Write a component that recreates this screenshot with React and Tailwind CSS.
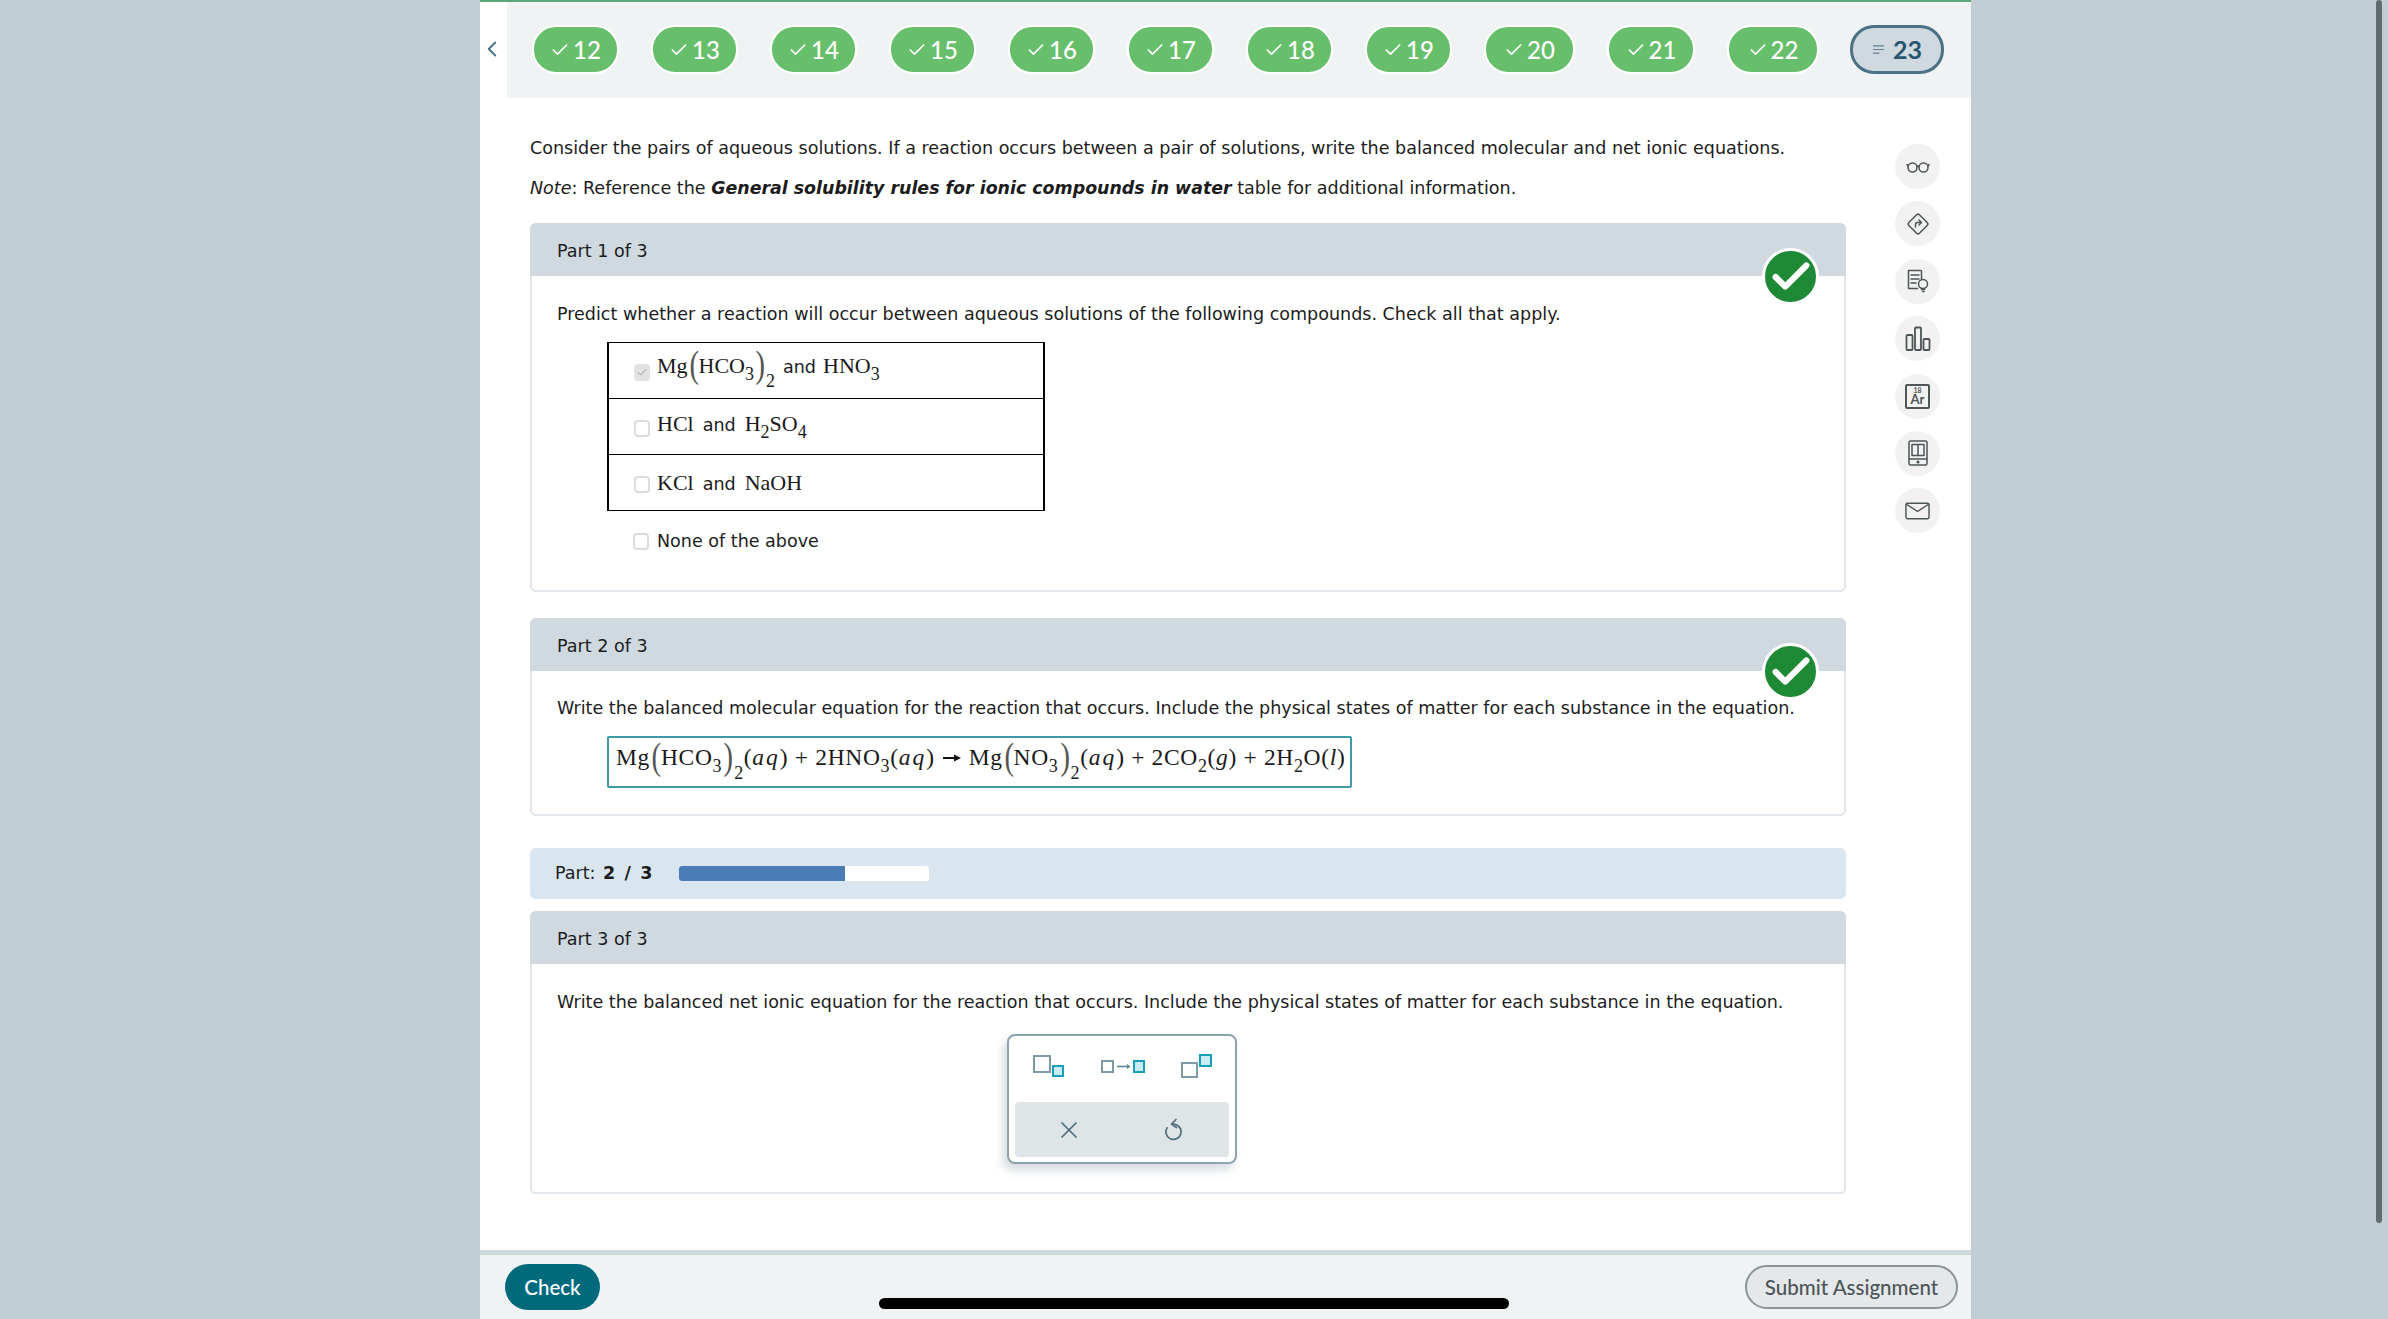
import React from 'react';
import { Check, ChevronLeft, X } from 'lucide-react';

const verdana = "font-['DejaVu_Sans',sans-serif]";
const lato = "font-['Lato',sans-serif]";
const times = "font-['Liberation_Serif',serif]";

const pills = [
  ['12', 'w-[87px]'], ['13', 'w-[87px]'], ['14', 'w-[87px]'], ['15', 'w-[87px]'],
  ['16', 'w-[87px]'], ['17', 'w-[87px]'], ['18', 'w-[87px]'], ['19', 'w-[87px]'],
  ['20', 'w-[91px]'], ['21', 'w-[88px]'], ['22', 'w-[92px]'],
];

function Sub({ deep, children }) {
  return <sub className={`align-baseline relative text-[18px] leading-none ${deep ? 'top-[14px] ml-[1px]' : 'top-[7px]'}`}>{children}</sub>;
}

function BigParen({ children }) {
  return <span className="inline-block text-[#555] text-[38px] leading-none font-normal scale-x-75 align-[-4px] w-[11px] text-center">{children}</span>;
}

function Part({ title, done, children, className }) {
  return (
    <section className={`relative border-2 border-t-0 border-[#e1e7ea] rounded-md ${className}`}>
      <header className={`${verdana} h-[53px] -mx-[2px] pt-[4px] bg-[#d0d9e0] rounded-t-md pl-[27px] flex items-center text-[17.55px] text-[#1c1c1c]`}>{title}</header>
      {done && (
        <div className="absolute right-[25px] top-[25px] w-[57px] h-[57px] rounded-full bg-[#1f8a36] border-[3px] border-white flex items-center justify-center">
          <Check className="w-[46px] h-[46px] text-white" strokeWidth={3.2} />
        </div>
      )}
      {children}
    </section>
  );
}

function Box({ checked, className = '' }) {
  return (
    <span className={`w-[16px] h-[17px] shrink-0 rounded-[4px] border-2 flex items-center justify-center ${checked ? 'bg-[#e2e2e2] border-[#e2e2e2]' : 'bg-white border-[#dcdcdc]'} ${className}`}>
      {checked && <Check className="w-[13px] h-[13px] text-[#9c9c9c]" strokeWidth={2} />}
    </span>
  );
}

function Row({ checked, children, className, textClass }) {
  return (
    <div className={`pl-[25px] flex items-center gap-[7px] ${className}`}>
      <Box checked={checked} className="mt-[3px]" />
      <div className={`${times} text-[22px] text-[#1a1a1a] whitespace-nowrap ${textClass}`}>{children}</div>
    </div>
  );
}

function And({ tight }) {
  return <span className={`${verdana} text-[17.55px] ${tight ? 'ml-[8px] mr-[7px]' : 'mx-[9px]'}`}>and</span>;
}

function Aq({ children }) {
  return <i className="tracking-[2px]">{children}</i>;
}

// side tool icons, drawn to match the reference strokes
const iconStroke = { fill: 'none', stroke: '#4d5557', strokeWidth: 1.5, strokeLinecap: 'round', strokeLinejoin: 'round' };

function Glasses() {
  return (
    <svg viewBox="0 0 24 12" className="w-[24px] h-[12px]" {...iconStroke}>
      <circle cx="6.5" cy="6.5" r="4.5" /><circle cx="17.5" cy="6.5" r="4.5" />
      <path d="M11 5.5q1-1 2 0M2 5 1 3.5M22 5l1-1.5" />
    </svg>
  );
}

function Diamond() {
  return (
    <svg viewBox="0 0 24 24" className="w-[24px] h-[24px]" {...iconStroke}>
      <rect x="4.5" y="4.5" width="15" height="15" rx="2" transform="rotate(45 12 12)" />
      <path d="M9.5 15v-2.5a2 2 0 0 1 2-2H15M13 8l2.5 2.5L13 13" />
    </svg>
  );
}

function DocBulb() {
  return (
    <svg viewBox="0 0 24 24" className="w-[24px] h-[24px]" {...iconStroke}>
      <path d="M15.5 10V2.5a1 1 0 0 0-1-1H2.5v18h9" />
      <path d="M5 6h8M5 10h8M5 14h5" />
      <circle cx="17" cy="15" r="4.5" /><path d="M15.5 20.5h3M16.5 22.5h1.5" />
    </svg>
  );
}

function Bars() {
  return (
    <svg viewBox="0 0 26 26" className="w-[26px] h-[26px]" {...iconStroke} strokeWidth={1.8}>
      <rect x="1.5" y="9" width="6" height="15" rx="1" /><rect x="10" y="1.5" width="6" height="22.5" rx="1" /><rect x="18.5" y="13" width="6" height="11" rx="1" />
    </svg>
  );
}

function Element() {
  return (
    <div className={`${lato} w-[25px] h-[25px] border-2 border-[#4d5557] rounded-[2px] flex flex-col items-center justify-center text-[#4d5557] leading-none`}>
      <span className="text-[7px] font-bold">18</span>
      <span className="text-[13px] font-bold -mt-[1px]">Ar</span>
    </div>
  );
}

function Ebook() {
  return (
    <svg viewBox="0 0 20 26" className="w-[20px] h-[26px]" {...iconStroke}>
      <rect x="1" y="1" width="18" height="24" rx="1.5" />
      <path d="M1 19h18M4 4.5h12v11H4zM10 5v10.5" /><circle cx="10" cy="22" r="0.8" fill="#4d5557" />
    </svg>
  );
}

function Mail() {
  return (
    <svg viewBox="0 0 26 18" className="w-[25px] h-[18px]" {...iconStroke}>
      <rect x="1" y="1" width="24" height="16" rx="1.5" /><path d="m1.5 2 11.5 7.5L24.5 2" />
    </svg>
  );
}

const tools = [Glasses, Diamond, DocBulb, Bars, Element, Ebook, Mail];

function Arrow() {
  return (
    <svg viewBox="0 0 18 10" className="inline-block w-[18px] h-[10px] mx-[8px] align-[2px]">
      <path d="M0 5h12" stroke="#111" strokeWidth="2" /><path d="M11 1.5 18 5l-7 3.5z" fill="#111" />
    </svg>
  );
}

function Undo() {
  return (
    <svg viewBox="0 0 20 24" className="w-[20px] h-[24px]" fill="none" stroke="#4d6f7c" strokeWidth="1.7" strokeLinecap="round" strokeLinejoin="round">
      <path d="M9 6.2a7.6 7.6 0 1 1-6 3.6" />
      <path d="M12 1.5 7.5 6l5 3.5" />
    </svg>
  );
}

export default function App() {
  return (
    <div className="relative h-[1319px] overflow-hidden bg-[#c1ced4]">
      <div className="ml-[480px] w-[1491px] h-full flex flex-col bg-white">
        {/* question nav */}
        <nav className="h-[98px] shrink-0 border-t-2 border-[#5aa873] flex">
          <div className="w-[27px] bg-white flex items-center justify-center">
            <ChevronLeft className="w-[26px] h-[26px] -ml-[3px] -mt-[2px] text-[#4a7186]" strokeWidth={1.8} />
          </div>
          <div className="flex-1 bg-[#eff3f4] flex items-start pt-[23px] pl-[25px] gap-[32px]">
            {pills.map(([n, w]) => (
              <div key={n} className={`${lato} ${w} shrink-0 h-[49px] rounded-[24px] bg-[#67bf6b] border-2 border-white flex items-center justify-center gap-[3px] text-white text-[24px] font-medium`}>
                <Check className="w-[20px] h-[20px]" strokeWidth={2} />
                {n}
              </div>
            ))}
            <div className={`${lato} w-[94px] shrink-0 h-[49px] -ml-[1px] rounded-[24px] bg-[#d0d9e0] border-[3px] border-[#4a7186] flex items-center justify-center gap-[8px] text-[#29566f] text-[25px] font-bold`}>
              <svg viewBox="0 0 14 12" className="w-[13px] h-[11px]" fill="none" stroke="#5f8296" strokeWidth="1.3">
                <path d="M1 2h12M1 6h12M1 10h7" />
              </svg>
              23
            </div>
          </div>
        </nav>

        <div className="flex-1 flex min-h-0">
          <main className={`${verdana} w-[1316px] ml-[50px] pt-[37px] text-[17.55px] text-[#1c1c1c]`}>
            <p className="leading-[26px] whitespace-nowrap">Consider the pairs of aqueous solutions. If a reaction occurs between a pair of solutions, write the balanced molecular and net ionic equations.</p>
            <p className="leading-[26px] mt-[14px] mb-[22px] whitespace-nowrap"><i>Note</i>: Reference the <b className="text-[17.4px]"><i>General solubility rules for ionic compounds in water</i></b> table for additional information.</p>

            <Part title="Part 1 of 3" done className="h-[369px]">
              <p className="leading-[26px] mt-[25px] ml-[25px]">Predict whether a reaction will occur between aqueous solutions of the following compounds. Check all that apply.</p>
              <div className="ml-[75px] mt-[15px] w-[438px] border-y border-x-2 border-black">
                <Row checked className="h-[56px] border-b border-black" textClass="-mt-[13px]">Mg<BigParen>(</BigParen>HCO<Sub>3</Sub><BigParen>)</BigParen><Sub deep>2</Sub><And tight />HNO<Sub>3</Sub></Row>
                <Row className="h-[56px] border-b border-black" textClass="-mt-[7px]">HCl<And />H<Sub>2</Sub>SO<Sub>4</Sub></Row>
                <Row className="h-[55px]" textClass="mt-[0px]">KCl<And />NaOH</Row>
              </div>
              <div className="ml-[101px] mt-[17px] flex items-center gap-[8px] leading-[26px]">
                <Box />
                <span>None of the above</span>
              </div>
            </Part>

            <Part title="Part 2 of 3" done className="mt-[26px] h-[198px]">
              <p className="leading-[26px] mt-[24px] ml-[25px] whitespace-nowrap">Write the balanced molecular equation for the reaction that occurs. Include the physical states of matter for each substance in the equation.</p>
              <div className={`${times} ml-[75px] mt-[15px] w-[745px] h-[52px] border-2 border-[#3d9aa6] rounded-[2px] flex items-center pl-[7px] text-[23.5px] tracking-[0.65px] text-[#1a1a1a] whitespace-nowrap`}>
                <div className="-mt-[11px]">
                  Mg<BigParen>(</BigParen>HCO<Sub>3</Sub><BigParen>)</BigParen><Sub deep>2</Sub>(<Aq>aq</Aq>) + 2HNO<Sub>3</Sub>(<Aq>aq</Aq>)<Arrow />Mg<BigParen>(</BigParen>NO<Sub>3</Sub><BigParen>)</BigParen><Sub deep>2</Sub>(<Aq>aq</Aq>) + 2CO<Sub>2</Sub>(<i>g</i>) + 2H<Sub>2</Sub>O(<i>l</i>)
                </div>
              </div>
            </Part>

            <div className="mt-[32px] h-[51px] bg-[#d9e6f0] rounded-md flex items-center pl-[25px]">
              <span className="w-[124px]">Part: <b className="ml-[2px] tracking-[1.6px]">2 / 3</b></span>
              <div className="w-[250px] h-[15px] bg-white rounded-[3px] overflow-hidden">
                <div className="h-full w-[166px] bg-[#4a7db8]" />
              </div>
            </div>

            <Part title="Part 3 of 3" className="mt-[12px] h-[283px]">
              <p className="leading-[26px] mt-[25px] ml-[25px] whitespace-nowrap">Write the balanced net ionic equation for the reaction that occurs. Include the physical states of matter for each substance in the equation.</p>
              <div className="ml-[475px] mt-[19px] w-[230px] h-[130px] bg-white border-2 border-[#8ea4ad] rounded-[8px] shadow-[-4px_6px_10px_rgba(120,140,150,0.3)] px-[6px] pt-[6px] flex flex-col">
                <div className="flex-1 flex items-center justify-between pl-[18px] pr-[17px] pb-[12px]">
                  <svg viewBox="0 0 31 24" className="w-[31px] h-[24px]">
                    <rect x="1" y="2" width="16" height="16" fill="#fff" stroke="#7e9aa5" strokeWidth="2" />
                    <rect x="20" y="12" width="10" height="10" fill="#c9ecf2" stroke="#14a0b8" strokeWidth="2" />
                  </svg>
                  <svg viewBox="0 0 44 24" className="w-[44px] h-[24px]">
                    <rect x="1" y="7" width="11" height="11" fill="#fff" stroke="#7e9aa5" strokeWidth="2" />
                    <path d="M16 12.5h10" stroke="#5d8290" strokeWidth="1.6" /><path d="M26 10l3.5 2.5-3.5 2.5z" fill="#5d8290" />
                    <rect x="33" y="7" width="10" height="11" fill="#c9ecf2" stroke="#14a0b8" strokeWidth="2" />
                  </svg>
                  <svg viewBox="0 0 31 24" className="w-[31px] h-[24px]">
                    <rect x="1" y="9" width="15" height="14" fill="#fff" stroke="#7e9aa5" strokeWidth="2" />
                    <rect x="19" y="1" width="11" height="11" fill="#c9ecf2" stroke="#14a0b8" strokeWidth="2" />
                  </svg>
                </div>
                <div className="h-[55px] mb-[5px] pr-[5px] bg-[#dfe5e7] rounded-[4px] flex items-center justify-around">
                  <X className="w-[28px] h-[28px] text-[#4d6f7c]" strokeWidth={1.5} />
                  <Undo />
                </div>
              </div>
            </Part>
          </main>

          <aside className="ml-[49px] pt-[46px] w-[45px] flex flex-col gap-[12.4px]">
            {tools.map((Icon, i) => (
              <div key={i} className="w-[45px] h-[45px] rounded-full bg-[#f2f2f2] flex items-center justify-center">
                <Icon />
              </div>
            ))}
          </aside>
        </div>

        <footer className="h-[69px] shrink-0 border-t-[5px] border-[#d0dade] bg-[#eff3f4] flex items-center justify-between pl-[25px] pr-[13px]">
          <button className={`${lato} w-[95px] h-[46px] rounded-[23px] bg-[#006a7c] text-white text-[20.5px] font-medium`}>Check</button>
          <button className={`${lato} w-[213px] h-[44px] rounded-[22px] bg-[#e4e8ea] border-2 border-[#8a9496] text-[#4d5557] text-[20.5px] font-medium`}>Submit Assignment</button>
        </footer>
      </div>

      {/* overlays from the device: home bar and scroll thumb */}
      <div className="absolute left-[879px] top-[1298px] w-[630px] h-[11px] rounded-full bg-black" />
      <div className="absolute left-[2376px] top-0 w-[6px] h-[1223px] rounded-full bg-[#5f6b6e]" />
    </div>
  );
}
